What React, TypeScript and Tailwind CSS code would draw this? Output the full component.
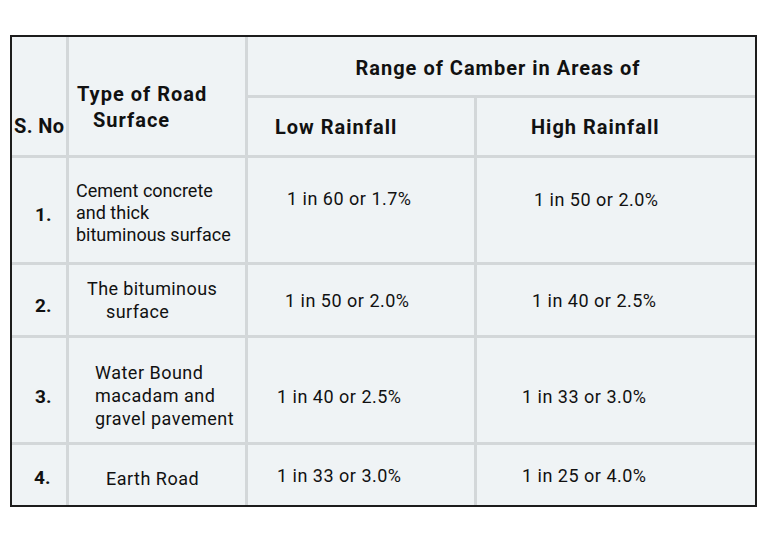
const cell = "bg-[#eff3f5] flex flex-col justify-center text-[#111]";
const head = "text-[20px] font-bold leading-[26px] tracking-[1px]";
const num = "text-[19px] font-bold";
const val = "text-[18px] tracking-[0.5px]";

export default function App() {
  return (
    <div className="w-[768px] h-[543px] bg-white pt-[35px] pl-[10px] font-['Roboto',sans-serif]">
      <div className="w-[747px] border-2 border-[#1c1c1c] bg-[#d3d7d9]">
        <div className="grid grid-cols-[54px_176px_226px_278px] grid-rows-[58px_57px_104px_70px_104px_60px] gap-[3px]">
          {/* header */}
          <div className={`${cell} row-span-2 pl-[2px] pt-[59px] text-[20px] font-bold leading-[26px] whitespace-nowrap tracking-[0.4px]`}>
            S. No
          </div>
          <div className={`${cell} ${head} row-span-2 pl-[8px] pt-[22px]`}>
            <span>Type of Road</span>
            <span className="pl-[16px]">Surface</span>
          </div>
          <div className={`${cell} ${head} col-span-2 items-center pt-[3px] pr-[7px]`}>
            Range of Camber in Areas of
          </div>
          <div className={`${cell} ${head} pl-[27px]`}>Low Rainfall</div>
          <div className={`${cell} ${head} pl-[54px]`}>High Rainfall</div>

          {/* row 1 */}
          <div className={`${cell} ${num} pl-[23px] pt-[10px]`}>1.</div>
          <div className={`${cell} pl-[7px] pt-[6px] text-[18px] leading-[22px]`}>
            <span>Cement concrete</span>
            <span>and thick</span>
            <span>bituminous surface</span>
          </div>
          <div className={`${cell} ${val} pl-[39px] pb-[24px]`}>1 in 60 or 1.7%</div>
          <div className={`${cell} ${val} pl-[57px] pb-[22px]`}>1 in 50 or 2.0%</div>

          {/* row 2 */}
          <div className={`${cell} ${num} pl-[23px] pt-[12px]`}>2.</div>
          <div className={`${cell} pl-[18px] text-[18px] leading-[23px] tracking-[0.4px]`}>
            <span>The bituminous</span>
            <span className="pl-[19px]">surface</span>
          </div>
          <div className={`${cell} ${val} pl-[37px]`}>1 in 50 or 2.0%</div>
          <div className={`${cell} ${val} pl-[55px]`}>1 in 40 or 2.5%</div>

          {/* row 3 */}
          <div className={`${cell} ${num} pl-[23px] pt-[14px]`}>3.</div>
          <div className={`${cell} pl-[26px] pt-[10px] text-[18px] leading-[23px] tracking-[0.5px]`}>
            <span>Water Bound</span>
            <span>macadam and</span>
            <span>gravel pavement</span>
          </div>
          <div className={`${cell} ${val} pl-[29px] pt-[12px]`}>1 in 40 or 2.5%</div>
          <div className={`${cell} ${val} pl-[45px] pt-[12px]`}>1 in 33 or 3.0%</div>

          {/* row 4 */}
          <div className={`${cell} ${num} pl-[22px] pt-[6px]`}>4.</div>
          <div className={`${cell} ${val} pl-[37px] pt-[6px]`}>Earth Road</div>
          <div className={`${cell} ${val} pl-[29px]`}>1 in 33 or 3.0%</div>
          <div className={`${cell} ${val} pl-[45px]`}>1 in 25 or 4.0%</div>
        </div>
      </div>
    </div>
  );
}
